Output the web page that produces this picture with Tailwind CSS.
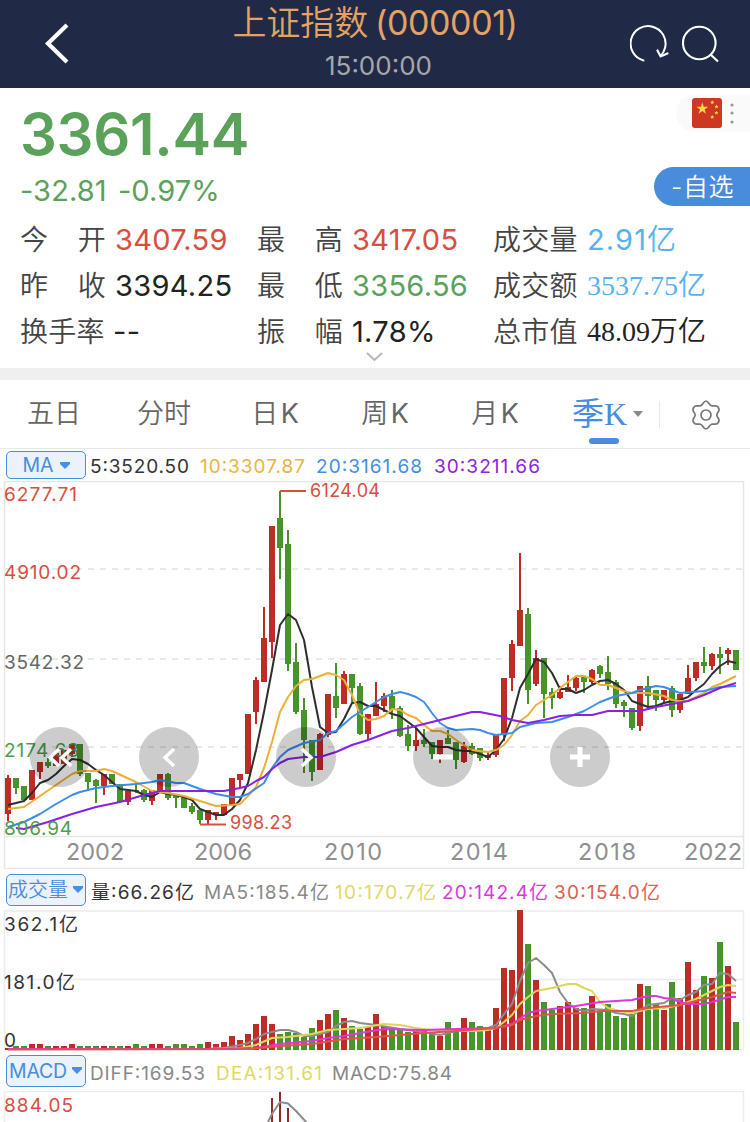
<!DOCTYPE html>
<html lang="zh-CN">
<head>
    <meta charset="UTF-8">
    <meta name="viewport" content="width=device-width, initial-scale=1.0">
    <title>上证指数 (000001)</title>
    <script src="https://cdn.jsdelivr.net/npm/@tailwindcss/browser@4"></script>
    <style>
        body {
            font-family: Inter, 'Noto Sans CJK SC', sans-serif;
            -webkit-font-smoothing: antialiased;
        }
    </style>
</head>
<body class="bg-white w-[750px] h-[1122px] overflow-hidden">

    <!-- Header -->
    <header class="h-[88px] bg-[#202a46] flex items-center justify-between relative">
        <svg class="ml-[44px]" width="26" height="42" viewBox="0 0 26 42" fill="none" stroke="#fff" stroke-width="4.2">
            <path d="M23 2 L4 20.5 L23 39"/>
        </svg>
        <div class="absolute inset-x-0 top-0 flex flex-col items-center">
            <h1 class="text-[34px] leading-[46px] text-[#e5a264] font-[350] whitespace-nowrap [word-spacing:-3px]">上证指数 <span class="font-normal tracking-[-0.4px]">(000001)</span></h1>
            <p class="mt-[6px] ml-[7px] text-[26px] leading-[28px] text-[#a7a7a9] font-normal">15:00:00</p>
        </div>
        <div class="flex items-center mr-[30px] gap-[10px]">
            <svg width="42" height="40" viewBox="0 0 42 40" fill="none" stroke="#fff" stroke-width="2" stroke-linecap="round">
                <path d="M13.5 36.5 A17.5 17.5 0 1 1 35 24 Q34 28 30.800 32"/>
                <path d="M27.500 26.500 L30.600 32.400 L37.500 29.500" stroke-width="2.2"/>
            </svg>
            <svg width="38" height="40" viewBox="0 0 38 40" fill="none" stroke="#fff" stroke-width="2.1">
                <circle cx="17.3" cy="19" r="16.3"/>
                <path d="M28.5 30.5 L36 37.5"/>
            </svg>
        </div>
    </header>

    <!-- Quote summary -->
    <section class="h-[280px] relative">
        <div class="flex justify-between">
            <div class="pl-[20px]">
                <div class="mt-[11px] text-[58px] leading-[70px] font-semibold text-[#5aa15a] tracking-[-0.3px]">3361.44</div>
                <div class="mt-[6px] text-[29px] leading-[32px] text-[#5aa15a] whitespace-nowrap tracking-[0.1px] [word-spacing:3px]">-32.81 -0.97%</div>
            </div>
            <div class="flex flex-col items-end">
                <div class="mt-[6px] w-[74px] h-[38px] rounded-l-full bg-[#fafafa] flex items-center pl-[16px] gap-[8px]">
                    <svg width="30" height="30" viewBox="0 0 30 30" fill="#fbd648">
                        <rect width="30" height="30" rx="3" fill="#cd3823"/>
                        <path d="M10.3 4.3 L11.7 8.7 L16.2 8.7 L12.6 11.4 L14 15.7 L10.3 13 L6.6 15.7 L8 11.4 L4.4 8.7 L8.9 8.7 Z"/>
                        <path d="M0 -2 L.6 -.7 L2 -.6 L1 .4 L1.2 1.8 L0 1.1 L-1.2 1.8 L-1 .4 L-2 -.6 L-.6 -.7 Z" transform="translate(20.3 4.3)"/>
                        <path d="M0 -2 L.6 -.7 L2 -.6 L1 .4 L1.2 1.8 L0 1.1 L-1.2 1.8 L-1 .4 L-2 -.6 L-.6 -.7 Z" transform="translate(24.5 8.6)"/>
                        <path d="M0 -2 L.6 -.7 L2 -.6 L1 .4 L1.2 1.8 L0 1.1 L-1.2 1.8 L-1 .4 L-2 -.6 L-.6 -.7 Z" transform="translate(24.4 14.7)"/>
                        <path d="M0 -2 L.6 -.7 L2 -.6 L1 .4 L1.2 1.8 L0 1.1 L-1.2 1.8 L-1 .4 L-2 -.6 L-.6 -.7 Z" transform="translate(20.3 19)"/>
                    </svg>
                    <svg width="4" height="22" viewBox="0 0 4 22" fill="#999">
                        <circle cx="2" cy="3" r="1.6"/><circle cx="2" cy="11" r="1.6"/><circle cx="2" cy="20" r="1.6"/>
                    </svg>
                </div>
                <div class="mt-[35px] w-[96px] h-[39px] rounded-l-full bg-[#4a8cdc] text-white text-[25px] leading-[41px] pl-[17px] whitespace-nowrap font-[350] tracking-[0.6px]">-自选</div>
            </div>
        </div>

        <div class="absolute left-[20px] top-[129px] grid grid-cols-[237px_236px_240px] text-[29px] leading-[46px] text-[#222] whitespace-nowrap tracking-[0.3px]">
            <div class="flex"><span class="w-[86px] mr-[9px] text-[28px] text-[#444] font-[350] flex justify-between"><i class="not-italic">今</i><i class="not-italic">开</i></span><span class="text-[#d84e40]">3407.59</span></div>
            <div class="flex"><span class="w-[86px] mr-[9px] text-[28px] text-[#444] font-[350] flex justify-between"><i class="not-italic">最</i><i class="not-italic">高</i></span><span class="text-[#d84e40]">3417.05</span></div>
            <div class="flex"><span class="w-[86px] mr-[8px] text-[28px] text-[#444] font-[350]">成交量</span><span class="text-[#56b2f0] tracking-[1.1px]">2.91<span class="font-[350]">亿</span></span></div>

            <div class="flex"><span class="w-[86px] mr-[9px] text-[28px] text-[#444] font-[350] flex justify-between"><i class="not-italic">昨</i><i class="not-italic">收</i></span><span>3394.25</span></div>
            <div class="flex"><span class="w-[86px] mr-[9px] text-[28px] text-[#444] font-[350] flex justify-between"><i class="not-italic">最</i><i class="not-italic">低</i></span><span class="text-[#5aa15a]">3356.56</span></div>
            <div class="flex"><span class="w-[86px] mr-[8px] text-[28px] text-[#444] font-[350]">成交额</span><span class="text-[28px] tracking-normal text-[#56b2f0] font-[350] font-['Liberation_Serif','Noto_Sans_CJK_SC',serif]">3537.75亿</span></div>

            <div class="flex"><span class="w-[86px] mr-[9px] text-[28px] text-[#444] font-[350]">换手率</span><span class="-ml-[2px]">--</span></div>
            <div class="flex"><span class="w-[86px] mr-[9px] text-[28px] text-[#444] font-[350] flex justify-between"><i class="not-italic">振</i><i class="not-italic">幅</i></span><span>1.78%</span></div>
            <div class="flex"><span class="w-[86px] mr-[8px] text-[28px] text-[#444] font-[350]">总市值</span><span class="text-[28px] tracking-normal font-[350] font-['Liberation_Serif','Noto_Sans_CJK_SC',serif]">48.09万亿</span></div>
        </div>
        <svg class="absolute left-[366px] top-[264px]" width="17" height="10" viewBox="0 0 17 10" fill="none" stroke="#b5b5b5" stroke-width="1.8">
            <path d="M1 1 L8.5 8 L16 1"/>
        </svg>
    </section>
    <div class="h-3 bg-[#efefef]"></div>

    <!-- Period tabs -->
    <nav class="h-[69px] border-b border-[#e8e8ea] flex text-[27px] leading-[68px] text-[#666] font-[350] whitespace-nowrap">
        <span class="w-[108px] text-center">五日</span>
        <span class="w-[112px] text-center">分时</span>
        <span class="w-[110px] text-center [word-spacing:-5px]">日 <span class="font-normal">K</span></span>
        <span class="w-[110px] text-center [word-spacing:-5px]">周 <span class="font-normal">K</span></span>
        <span class="w-[110px] text-center [word-spacing:-5px]">月 <span class="font-normal">K</span></span>
        <div class="w-[109px] pl-[22px] flex items-center relative">
            <span class="text-[32px] text-[#4a8cdc] font-normal font-['Liberation_Serif','Noto_Sans_CJK_SC',serif]">季K</span>
            <svg class="ml-[6px]" width="10" height="6" viewBox="0 0 10 6"><path d="M0 0 H10 L5 6 Z" fill="#8a8a8a"/></svg>
            <div class="absolute left-[39px] top-[58px] w-[30px] h-[6px] rounded-[3px] bg-[#4a8cdc]"></div>
        </div>
        <div class="w-px h-[27px] mt-[21px] bg-[#e8e8e8]"></div>
        <svg class="ml-[30px] mt-[19px]" width="32" height="32" viewBox="0 0 32 32" fill="none" stroke="#777" stroke-width="1.7" stroke-linejoin="round">
            <path d="M16 2 C18.5 2 19 6 21.5 6.8 C24 7.6 26.5 5.4 28.2 8.2 C31 12.5 26.8 12.8 26.8 16 C26.8 19.2 31 19.5 28.2 23.8 C26.5 26.6 24 24.4 21.5 25.2 C19 26 18.5 30 16 30 C13.5 30 13 26 10.5 25.2 C8 24.4 5.5 26.6 3.8 23.8 C1 19.5 5.2 19.2 5.2 16 C5.2 12.8 1 12.5 3.8 8.2 C5.5 5.4 8 7.6 10.5 6.8 C13 6 13.5 2 16 2 Z"/>
            <circle cx="16" cy="16" r="5"/>
        </svg>
    </nav>

    <!-- Main chart -->
    <div class="h-[32px] pl-[6px] flex items-center whitespace-nowrap">
        <button class="w-[80px] h-[28px] rounded-[5px] border border-[#4a8cdc] bg-[#eaf3fc] text-[#4a8cdc] text-[19.5px] leading-[26px] flex items-center justify-center gap-[6px]">MA
            <svg width="10" height="7" viewBox="0 0 10 7"><path d="M0 0 H10 V2 L5 7 L0 2 Z" fill="#4392ea"/></svg>
        </button>
        <svg class="h-[32px] w-[640px]" viewBox="86 449 640 32" font-size="19">
            <text x="90" y="473" textLength="99" fill="#333">5:3520.50</text>
            <text x="200" y="473" textLength="105" fill="#edb33f">10:3307.87</text>
            <text x="316" y="473" textLength="106" fill="#3f8fe6">20:3161.68</text>
            <text x="434" y="473" textLength="106" fill="#8a24e0">30:3211.66</text>
        </svg>
    </div>
    <svg id="kline" class="block" width="750" height="388" viewBox="0 481 750 388" fill="none"></svg>

    <!-- Volume -->
    <div class="h-[41px] pl-[6px] flex items-center whitespace-nowrap">
        <button class="w-[80px] h-[32px] rounded-[5px] border border-[#4a8cdc] bg-[#eaf3fc] text-[#4a8cdc] text-[20px] leading-[30px] flex items-center pl-px gap-[5px] font-[350]">成交量
            <svg class="shrink-0" width="10" height="7" viewBox="0 0 10 7"><path d="M0 0 H10 V2 L5 7 L0 2 Z" fill="#4392ea"/></svg>
        </button>
        <svg class="h-[41px] w-[640px]" viewBox="86 869 640 41" font-size="19">
            <text x="91" y="899" textLength="103" fill="#333">量:66.26亿</text>
            <text x="204" y="899" textLength="125" fill="#888">MA5:185.4亿</text>
            <text x="335" y="899" textLength="101" fill="#e0da62">10:170.7亿</text>
            <text x="442" y="899" textLength="106" fill="#dc37dc">20:142.4亿</text>
            <text x="554" y="899" textLength="106" fill="#e25d54">30:154.0亿</text>
        </svg>
    </div>
    <svg id="volume" class="block overflow-visible" width="750" height="140" viewBox="0 910 750 140" fill="none"></svg>

    <!-- MACD -->
    <div class="h-[41px] pl-[6px] flex items-center whitespace-nowrap">
        <button class="w-[80px] h-[32px] rounded-[5px] border border-[#4a8cdc] bg-[#eaf3fc] text-[#4a8cdc] text-[19.5px] leading-[30px] flex items-center pl-[2px] gap-[5px] tracking-[-0.2px]">MACD
            <svg class="shrink-0" width="10" height="7" viewBox="0 0 10 7"><path d="M0 0 H10 V2 L5 7 L0 2 Z" fill="#4392ea"/></svg>
        </button>
        <svg class="h-[41px] w-[640px]" viewBox="86 1050 640 41" font-size="19">
            <text x="90" y="1080" textLength="115" fill="#888">DIFF:169.53</text>
            <text x="216" y="1080" textLength="106" fill="#e0da62">DEA:131.61</text>
            <text x="332" y="1080" textLength="120" fill="#888">MACD:75.84</text>
        </svg>
    </div>
    <svg class="block" width="750" height="31" viewBox="0 1091 750 31" fill="none">
        <path d="M4.5 1122 V1091.5 H743.5 V1122" stroke="#ececef" stroke-width="1.5"/>
        <path d="M272 1098 V1122 M280 1092 V1122 M288 1108 V1122" stroke="#8f2a2a" stroke-width="2"/>
        <path d="M268 1122 L272 1114 L280 1102 L288 1103.500 L296 1111 L307 1123" stroke="#8c8c8c" stroke-width="2"/>
        <text x="4" y="1112" font-size="19" textLength="69" fill="#d84e40">884.05</text>
    </svg>

    <script>
        const RED = '#be2c27', GREEN = '#47942b';
        // one quarter each: colour, body top, body bottom, high, low
        const candles = `R 778 814 775 821|G 778 788 778 794|G 786 800 786 800|R 770 800 770 800|R 762 772 762 779|G 762 766 758 768|R 753 766 753 766|R 750 764 750 764|R 744 754 744 757|G 744 774 744 776
G 773 782 773 791|G 780 786 779 803|R 774 786 774 795|G 774 784 774 784|G 784 802 784 802|R 791 802 791 805|G 790 791 782 793|G 790 800 789 802|R 790 801 790 805|R 774 791 774 791
G 774 798 773 800|G 796 798 796 808|G 796 808 796 808|G 806 812 803 814|G 810 820 810 824|R 810 820 810 824|R 812 815 812 820|R 804 815 804 815|R 778 806 778 806|R 774 780 774 788
R 714 774 714 774|R 680 712 677 724|R 638 682 607 682|R 526 642 526 658|G 518 548 491 579|G 544 664 530 671|G 662 712 643 714|G 710 740 698 773|G 740 772 740 781|R 734 770 733 770
R 694 735 694 737|G 696 708 663 718|R 674 704 671 704|G 674 688 674 702|G 686 734 683 735|R 714 734 714 740|R 704 716 682 716|R 696 706 693 712|G 696 710 690 719|G 708 736 706 737
G 734 746 725 751|R 740 746 728 751|G 740 744 729 747|G 742 754 742 759|R 740 754 740 763|G 738 744 730 744|G 742 760 742 769|R 746 762 742 763|G 746 754 743 755|G 748 758 748 761
R 755 758 751 760|R 735 755 735 757|R 678 735 678 741|R 644 678 640 691|R 610 646 553 646|G 614 690 608 704|R 658 684 650 686|G 658 694 658 718|G 692 698 688 709|R 692 698 686 699
R 687 692 675 692|R 678 688 677 691|G 677 682 677 693|R 670 682 669 684|G 666 674 665 678|G 672 684 656 690|G 682 704 680 708|G 702 706 700 717|G 708 728 708 730|R 686 726 686 731
G 686 696 676 706|G 690 700 690 711|R 690 700 690 703|G 688 710 686 717|R 694 710 694 713|R 678 694 665 694|R 662 678 662 681|G 662 666 647 673|R 654 666 653 670|G 654 658 647 674
R 650 654 648 665|G 650 670 650 670`.split(/[|\n]/).map(s => s.split(' '));

        // volume bar heights, same order as the candles
        const volumes = [2,4,4,6,6,4,4,4,6,4,4,4,4,4,4,4,6,4,6,6,4,6,6,4,6,8,6,8,14,10,16,26,34,26,16,18,17,13,22,30,36,40,32,24,21,24,36,24,22,20,18,20,20,16,14,28,20,32,28,24,20,42,82,80,140,106,70,48,40,44,48,42,42,54,38,46,34,32,36,66,64,46,40,68,52,88,60,74,72,108,84,28];

        const x = i => 8 + i * 8;
        const line = (points, color, width = 2) =>
            `<polyline points="${points}" stroke="${color}" stroke-width="${width}" stroke-linejoin="round"/>`;
        const label = (lx, ly, len, color, text, size = 19) =>
            `<text x="${lx}" y="${ly}" textLength="${len}" font-size="${size}" fill="${color}">${text}</text>`;

        let k = '';
        k += '<path d="M4.500 869 V481.500 H743.500 V869 M4 836.500 H744 M4 868.500 H744" stroke="#e6e6e9" stroke-width="1.500"/>';
        k += '<path d="M4 569 H743 M4 659 H743 M4 747 H743" stroke="#e9e9ea" stroke-width="2" stroke-dasharray="6 6"/>';
        candles.forEach(([c, top, bottom, high, low], i) => {
            const color = c === 'R' ? RED : GREEN;
            k += `<rect x="${x(i) - 1}" y="${high}" width="2" height="${low - high}" fill="${color}"/>`;
            k += `<rect x="${x(i) - 3}" y="${top}" width="6" height="${bottom - top}" fill="${color}"/>`;
        });
        k += line('8,805 16,803 24,801 32,793 40,783 48,780 56,774 64,766 72,759 80,760 88,764 96,770 104,775 112,782 120,789 128,790 136,791 144,795 152,797 160,792 168,794 176,795 184,797 192,800 200,809 208,812 216,815 224,815 232,809 240,800 248,783 256,750 264,712 272,670 280,625 288,614 296,620 304,640 312,687 320,727 328,733 336,732 344,719 352,703 360,702 368,706 376,706 384,710 392,714 400,716 408,722 416,728 424,737 432,746 440,747 448,747 456,750 464,751 472,751 480,754 488,757 496,750 504,739 512,718 520,688 528,674 536,659 544,662 552,673 560,689 568,689 576,693 584,690 592,685 600,681 608,680 616,684 624,690 632,701 640,704 648,707 656,706 664,703 672,701 680,700 688,697 696,690 704,684 712,674 720,666 728,661 736,663', '#2e2e2e');
        k += line('8,809 24,807 40,796 56,785 72,774 80,771 96,771 104,769 112,771 136,782 152,791 168,793 184,796 200,801 216,806 232,805 240,804 248,796 256,787 264,768 272,742 280,712 288,697 296,686 304,680 312,679 328,673 336,675 344,680 352,695 360,714 368,720 376,719 384,716 392,709 400,710 408,715 416,718 424,725 432,731 440,731 448,734 456,740 464,745 472,750 480,751 488,752 496,750 504,745 512,735 520,721 528,715 536,705 544,700 552,695 560,688 568,682 576,676 584,676 592,679 600,685 608,685 616,688 624,691 632,693 648,693 664,696 672,700 680,701 688,701 704,693 712,687 720,684 736,676', '#efae36');
        k += line('8,827 24,822 40,814 56,804 72,795 80,792 96,788 112,786 136,784 152,782 160,780 176,783 184,783 200,789 216,794 232,797 240,797 248,794 264,783 272,768 280,757 288,750 304,743 320,740 328,733 336,731 352,717 368,707 384,697 392,694 400,692 408,694 416,697 424,702 432,713 440,723 448,728 456,730 472,729 480,730 488,733 496,735 504,734 512,733 520,727 536,723 552,722 568,717 584,711 600,702 616,696 632,693 640,690 656,686 664,687 672,690 680,693 704,691 720,687 736,686', '#3c8cec');
        k += line('16,828 24,829 48,822 72,814 96,807 120,802 144,795 160,791 224,791 240,788 248,786 256,781 264,777 272,769 280,763 288,759 304,757 320,757 336,752 352,745 368,740 392,731 408,728 424,724 440,720 456,716 472,712 480,712 500,716 512,720 528,723 544,720 560,716 576,715 592,715 608,711 640,711 656,707 688,701 704,695 720,688 736,683', '#8a1fe6');
        k += '<path d="M280 491 H306 M200 824.500 H226" stroke="#d84e40" stroke-width="2"/>';
        k += label(310, 497, 70, '#d84e40', '6124.04', 18) + label(230, 829, 62, '#d84e40', '998.23', 18);
        k += label(4, 501, 73, '#d84e40', '6277.71') + label(4, 579, 77, '#d84e40', '4910.02') + label(4, 669, 80, '#666', '3542.32');
        k += label(4, 757, 75, '#4d9d4d', '2174.63') + label(4, 835, 68, '#4d9d4d', '806.94');
        [[66, 2002], [194, 2006], [324, 2010], [450, 2014], [578, 2018], [684, 2022]].forEach(([tx, year]) => {
            k += label(tx, 860, 58, '#8f8f8f', year, 23.5);
        });
        // zoom and pan buttons
        [60, 169, 306, 443, 580].forEach(cx => k += `<circle cx="${cx}" cy="757" r="30" fill="#000" fill-opacity="0.2"/>`);
        k += '<path d="M59 749 L50 757.500 L59 766 M71 749 L62 757.500 L71 766 M174 749 L165 757.500 L174 766 M302 749 L311 757.500 L302 766" stroke="#fff" stroke-width="3.500"/>';
        k += '<path d="M433 757 H453 M570 757 H590 M580 747 V767" stroke="#fff" stroke-width="5"/>';
        document.getElementById('kline').innerHTML = k;

        let v = '<path d="M4.500 1050 V911 H743.500 V1049.500 H4 M4 979.500 H743" stroke="#ececef" stroke-width="1.500"/>';
        volumes.forEach((h, i) => {
            v += `<rect x="${x(i) - 3}" y="${1050 - h}" width="6" height="${h}" fill="${candles[i][0] === 'R' ? RED : GREEN}"/>`;
        });
        v += line('208,1049 224,1048 240,1045 248,1043 256,1039 264,1034 272,1032 280,1030 288,1030 296,1032 304,1036 312,1036 328,1032 336,1026 344,1022 352,1021 360,1023 376,1025 400,1029 416,1031 440,1035 456,1031 488,1028 496,1025 504,1014 512,1004 520,981 528,963 536,958 544,965 552,973 560,992 568,1003 576,1009 584,1011 592,1009 608,1010 616,1013 624,1014 632,1016 640,1010 648,1005 664,1003 672,998 680,1000 688,995 696,992 704,985 712,984 720,973 728,974 736,981', '#8c8c8c');
        v += line('208,1049 240,1048 256,1045 272,1038 288,1037 304,1035 312,1034 328,1030 344,1029 360,1028 384,1024 400,1025 416,1028 440,1031 472,1031 488,1030 496,1028 504,1022 512,1015 520,1004 528,997 536,991 552,988 568,984 576,984 584,988 592,991 600,1002 608,1008 624,1012 632,1013 648,1009 664,1008 680,1005 696,999 712,991 720,987 728,985 736,986', '#dcd75a');
        v += line('8,1049 208,1049 256,1048 280,1044 312,1041 328,1038 344,1036 360,1033 384,1029 424,1030 456,1029 496,1028 512,1024 528,1013 536,1011 576,1006 600,1002 632,1000 648,996 656,996 664,998 672,999 680,1002 688,1004 704,1004 712,1002 728,997 736,997', '#e233dc');
        v += line('8,1049.500 250,1049 280,1046 312,1044 344,1039 376,1037 424,1033 456,1031 496,1028 512,1025 520,1020 536,1016 552,1014 584,1013 600,1011 632,1011 648,1008 680,1005 696,1001 712,997 728,992 736,993', '#e2524c');
        v += label(4, 931, 74, '#333', '362.1亿') + label(4, 989, 71, '#333', '181.0亿') + label(4, 1047, 12, '#333', '0');
        document.getElementById('volume').innerHTML = v;
    </script>
</body>
</html>
